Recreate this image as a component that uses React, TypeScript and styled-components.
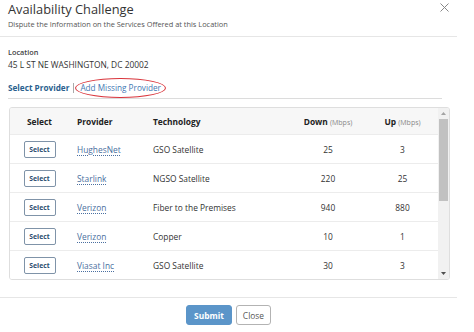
import React from "react";
import styled, { createGlobalStyle } from "styled-components";

const GlobalStyle = createGlobalStyle`
  html, body {
    margin: 0;
    padding: 0;
    background: #ffffff;
    font-family: "Open Sans", "Liberation Sans", sans-serif;
    color: #333;
  }
`

const Modal = styled.div`
  width: 457px;
  height: 332px;
  background: #fff;
  display: flex;
  flex-direction: column;
`

const Header = styled.div`
  position: relative;
  height: 37px;
  box-sizing: border-box;
  padding: 0 8px;
  border-bottom: 1px solid #e6e6e6;
`

const Title = styled.h1`
  margin: 0;
  font-size: 12.8px;
  line-height: 19px;
  font-weight: 400;
  color: #333;
`

const Subtitle = styled.div`
  font-size: 7.4px;
  line-height: 10px;
  color: #555;
`

const CloseX = styled.button`
  position: absolute;
  right: 7px;
  top: 2px;
  width: 11px;
  height: 11px;
  padding: 0;
  border: 0;
  background: none;
  display: flex;
  align-items: center;
  justify-content: center;
`

const Body = styled.div`
  padding: 10px 8px 0 8px;
  flex: 1;
`

const Label = styled.div`
  font-size: 7.3px;
  line-height: 10px;
  font-weight: 600;
  color: #444;
`

const Address = styled.div`
  font-size: 8.4px;
  line-height: 12px;
  color: #333;
  margin-top: 2px;
`

const Tabs = styled.div`
  margin-top: 8px;
  height: 20px;
  box-sizing: border-box;
  display: flex;
  align-items: center;
  gap: 4px;
  border-bottom: 1px solid #dcdcdc;
  margin-right: 7px;
  padding-bottom: 2px;
`

const Tab = styled.span<{ $active?: boolean }>`
  font-size: 8.2px;
  line-height: 12px;
  font-weight: ${p => (p.$active ? 700 : 400)};
  color: ${p => (p.$active ? "#2a5f8e" : "#3f78b4")};
`

const TabSep = styled.span`
  width: 1px;
  height: 10px;
  background: #aaa;
`

const Circled = styled.span`
  position: relative;
  display: inline-flex;
  padding: 0 2px;
  &::after {
    content: "";
    position: absolute;
    left: -3px;
    right: -3px;
    top: -4px;
    bottom: -4px;
    border: 1.3px solid #d9343b;
    border-radius: 50%;
  }
`

const TableBox = styled.div`
  margin-top: 8px;
  margin-left: 1px;
  width: 441px;
  height: 173px;
  box-sizing: border-box;
  border: 1px solid #dedede;
  border-radius: 3px;
  display: flex;
  overflow: hidden;
`

const TableArea = styled.div`
  flex: 1;
  display: flex;
  flex-direction: column;
`

const Row = styled.div<{ $head?: boolean }>`
  display: grid;
  grid-template-columns: 59px 76px 143px 80px 69px;
  align-items: center;
  height: ${p => (p.$head ? "26px" : "29px")};
  box-sizing: border-box;
  background: ${p => (p.$head ? "#f7f7f7" : "#fff")};
  border-top: ${p => (p.$head ? "none" : "1px solid #ececec")};
  font-size: 8.4px;
  color: #333;
`

const HeadCell = styled.div<{ $align?: string }>`
  font-weight: 700;
  color: #222;
  text-align: ${p => p.$align || "left"};
  padding-left: ${p => (p.$align === "left" || !p.$align ? "8px" : "0")};
`

const Unit = styled.span`
  font-weight: 400;
  color: #888;
  font-size: 7px;
`

const Cell = styled.div<{ $align?: string }>`
  text-align: ${p => p.$align || "left"};
  padding-left: ${p => (p.$align === "left" || !p.$align ? "8px" : "0")};
`

const SelectBtn = styled.button`
  justify-self: center;
  width: 32px;
  height: 17px;
  padding: 0;
  border: 1px solid #7f93a8;
  border-radius: 2px;
  background: #fff;
  font-family: "Open Sans", "Liberation Sans", sans-serif;
  font-size: 6.8px;
  font-weight: 700;
  color: #2c4d6e;
`

const ProviderLink = styled.a`
  color: #4a6fa0;
  text-decoration: underline dotted;
  text-underline-offset: 2px;
`

const Scrollbar = styled.div`
  width: 11px;
  background: #f1f1f1;
  display: flex;
  flex-direction: column;
  align-items: center;
`

const Arrow = styled.div`
  height: 11px;
  display: flex;
  align-items: center;
  justify-content: center;
`

const Thumb = styled.div`
  width: 9px;
  height: 82px;
  background: #c1c1c1;
`

const Track = styled.div`
  flex: 1;
`

const Footer = styled.div`
  height: 34px;
  border-top: 1px solid #e6e6e6;
  display: flex;
  justify-content: center;
  align-items: center;
  gap: 4px;
`

const Button = styled.button<{ $primary?: boolean }>`
  height: 20px;
  padding: 0 ${p => (p.$primary ? "7px" : "6px")};
  border-radius: 3px;
  border: 1px solid ${p => (p.$primary ? "#5b95c9" : "#b3b3b3")};
  background: ${p => (p.$primary ? "#5b95c9" : "#fff")};
  color: ${p => (p.$primary ? "#fff" : "#555")};
  font-family: "Open Sans", "Liberation Sans", sans-serif;
  font-size: 8.4px;
  font-weight: ${p => (p.$primary ? 700 : 400)};
`

const rows = [
  { provider: "HughesNet", tech: "GSO Satellite", down: 25, up: 3 },
  { provider: "Starlink", tech: "NGSO Satellite", down: 220, up: 25 },
  { provider: "Verizon", tech: "Fiber to the Premises", down: 940, up: 880 },
  { provider: "Verizon", tech: "Copper", down: 10, up: 1 },
  { provider: "Viasat Inc", tech: "GSO Satellite", down: 30, up: 3 },
]

export default function App() {
  return (
    <>
      <GlobalStyle />
      <Modal>
        <Header>
          <Title>Availability Challenge</Title>
          <Subtitle>Dispute the Information on the Services Offered at this Location</Subtitle>
          <CloseX aria-label="Close">
            <svg width="9" height="9" viewBox="0 0 9 9">
              <path d="M0.5 0.5 L8.5 8.5 M8.5 0.5 L0.5 8.5" stroke="#888" strokeWidth="1" />
            </svg>
          </CloseX>
        </Header>
        <Body>
          <Label>Location</Label>
          <Address>45 L ST NE WASHINGTON, DC 20002</Address>
          <Tabs>
            <Tab $active>Select Provider</Tab>
            <TabSep />
            <Circled>
              <Tab>Add Missing Provider</Tab>
            </Circled>
          </Tabs>
          <TableBox>
            <TableArea>
              <Row $head>
                <HeadCell $align="center">Select</HeadCell>
                <HeadCell>Provider</HeadCell>
                <HeadCell>Technology</HeadCell>
                <HeadCell $align="center">
                  Down <Unit>(Mbps)</Unit>
                </HeadCell>
                <HeadCell $align="center">
                  Up <Unit>(Mbps)</Unit>
                </HeadCell>
              </Row>
              {rows.map((r, i) => (
                <Row key={i}>
                  <SelectBtn>Select</SelectBtn>
                  <Cell>
                    <ProviderLink>{r.provider}</ProviderLink>
                  </Cell>
                  <Cell>{r.tech}</Cell>
                  <Cell $align="center">{r.down}</Cell>
                  <Cell $align="center">{r.up}</Cell>
                </Row>
              ))}
            </TableArea>
            <Scrollbar>
              <Arrow>
                <svg width="5" height="3" viewBox="0 0 5 3">
                  <path d="M0 3 L2.5 0 L5 3 Z" fill="#a3a3a3" />
                </svg>
              </Arrow>
              <Thumb />
              <Track />
              <Arrow>
                <svg width="5" height="3" viewBox="0 0 5 3">
                  <path d="M0 0 L5 0 L2.5 3 Z" fill="#505050" />
                </svg>
              </Arrow>
            </Scrollbar>
          </TableBox>
        </Body>
        <Footer>
          <Button $primary>Submit</Button>
          <Button>Close</Button>
        </Footer>
      </Modal>
    </>
  )
}
